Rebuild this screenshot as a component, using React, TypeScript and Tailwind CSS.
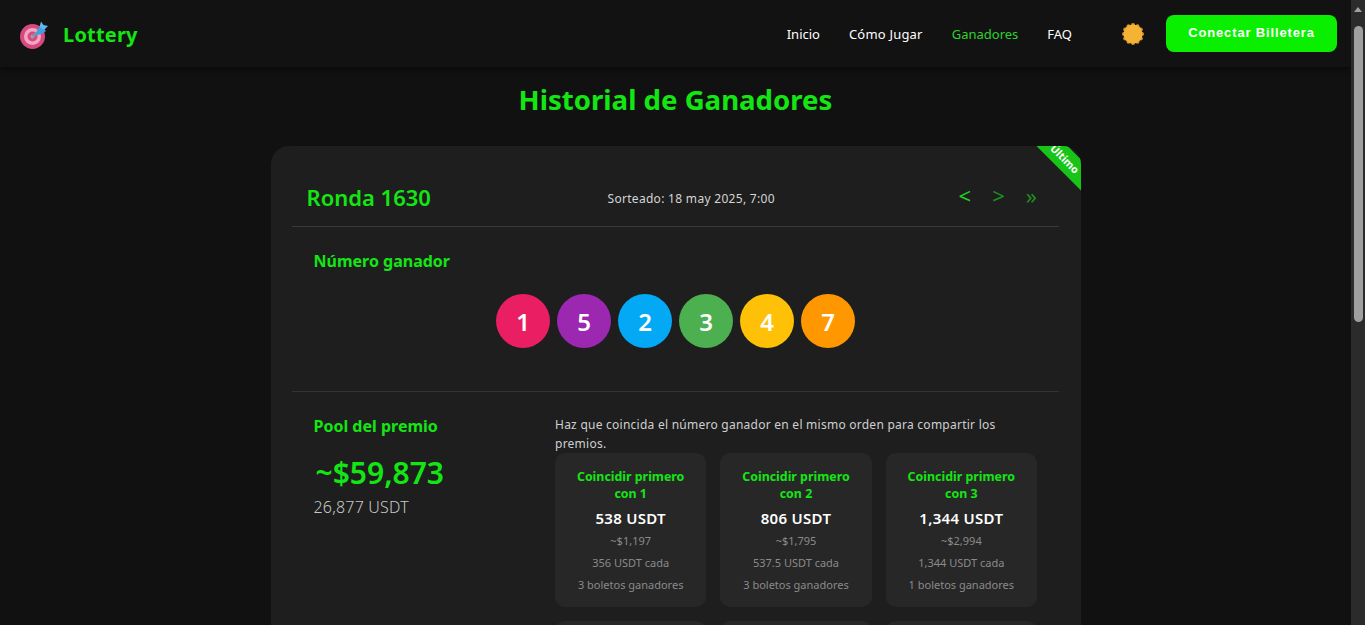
const balls = [
  { n: 1, color: "bg-[#e91e63]" },
  { n: 5, color: "bg-[#9c27b0]" },
  { n: 2, color: "bg-[#03a9f4]" },
  { n: 3, color: "bg-[#4caf50]" },
  { n: 4, color: "bg-[#ffc107]" },
  { n: 7, color: "bg-[#ff9800]" },
];

const prizes = [
  { match: 1, amount: "538 USDT", usd: "~$1,197", each: "356 USDT cada", winners: "3 boletos ganadores" },
  { match: 2, amount: "806 USDT", usd: "~$1,795", each: "537.5 USDT cada", winners: "3 boletos ganadores" },
  { match: 3, amount: "1,344 USDT", usd: "~$2,994", each: "1,344 USDT cada", winners: "1 boletos ganadores" },
];

const TargetLogo = () => (
  <svg width="32" height="32" viewBox="0 0 32 32" className="shrink-0">
    <circle cx="14.5" cy="18.5" r="12.5" fill="#d64a7e" />
    <circle cx="14.5" cy="18.5" r="8.5" fill="#f3a6c4" />
    <circle cx="14.5" cy="18.5" r="5" fill="#d64a7e" />
    <circle cx="14.5" cy="18.5" r="2" fill="#a8a0a8" />
    <path d="M14.5 18.5 L19 14" stroke="#8a97a0" strokeWidth="2" />
    <path d="M17 18 L20 10.5 L23 8 L28 13 L24.5 15.5 Z" fill="#3f9fe0" />
    <path d="M21.5 9 L23 3.5 L25.5 7 L30 8 L26 12 Z" fill="#5cb8ef" />
  </svg>
);

const SunIcon = () => {
  const bumps = Array.from({ length: 12 }, (_, i) => (i * Math.PI) / 6);
  return (
    <svg width="22" height="22" viewBox="0 0 22 22">
      {bumps.map((a) => (
        <circle key={a} cx={11 + 9 * Math.cos(a)} cy={11 + 9 * Math.sin(a)} r="2" fill="#d9912a" />
      ))}
      <circle cx="11" cy="11" r="9.5" fill="#f5b335" />
    </svg>
  );
};

const PrizeCard = ({ prize }: { prize: (typeof prizes)[number] }) => (
  <div className="flex h-[154px] flex-col items-center rounded-[10px] bg-[#272727] px-3 pt-[15px] text-center">
    <div className="w-[124px] text-[12.4px] font-bold leading-[17px] text-[#14e614]">
      {`Coincidir primero con ${prize.match}`}
    </div>
    <div className="mt-[6px] text-[15px] font-semibold leading-[20px] tracking-[0.3px] text-white">{prize.amount}</div>
    <div className="mt-[4px] text-[11px] leading-[18px] text-[#8a8a8a]">{prize.usd}</div>
    <div className="mt-[4px] text-[11px] leading-[18px] text-[#8a8a8a]">{prize.each}</div>
    <div className="mt-[4px] text-[11px] leading-[18px] text-[#8a8a8a]">{prize.winners}</div>
  </div>
);

export default function App() {
  return (
    <div className="flex h-[625px] overflow-hidden bg-[#111111] font-['Noto_Sans',sans-serif]">
      <div className="min-w-0 flex-1">
        <header className="flex h-[67px] items-center bg-[#121212] pl-[18px] pr-[14px] shadow-[0_2px_6px_rgba(0,0,0,0.5)]">
          <TargetLogo />
          <span className="ml-[13px] pt-[2px] text-[20px] font-bold tracking-[0.2px] text-[#14e614]">Lottery</span>
          <nav className="ml-auto flex items-center gap-[29px] pt-[3px] text-[13px] text-white">
            <a>Inicio</a>
            <a className="tracking-[0.2px]">Cómo Jugar</a>
            <a className="text-[#2fd12f]">Ganadores</a>
            <a>FAQ</a>
          </nav>
          <div className="ml-[50px] flex">
            <SunIcon />
          </div>
          <button className="ml-[22px] h-[37px] w-[171px] rounded-[8px] bg-[#0aef00] pb-[2px] font-['Liberation_Sans',sans-serif] text-[13px] font-bold tracking-[0.85px] text-white">
            Conectar Billetera
          </button>
        </header>

        <main className="flex flex-col items-center">
          <h1 className="mt-[12px] text-[27.6px] font-bold leading-[40px] text-[#14e614]">Historial de Ganadores</h1>

          <section className="relative mt-[27px] w-[810px] overflow-hidden rounded-[18px] bg-[#1e1e1e] pl-[21px] pr-[21.5px]">
            <div className="absolute right-[-39px] top-[2px] w-[110px] rotate-45 bg-[#19c419] pb-[3px] pt-[4px] text-center text-[10.5px] font-bold leading-[15px] text-white">
              Último
            </div>

            <div className="flex h-[81px] items-center border-b border-[#3a3a3a] pl-[15px] pr-[22px] pt-[22px]">
              <h2 className="w-[301px] text-[22px] font-semibold text-[#14e614]">Ronda 1630</h2>
              <span className="mt-[4px] text-[12px] tracking-[0.3px] text-[#d5d5d5]">Sorteado: 18 may 2025, 7:00</span>
              <div className="ml-auto flex items-center gap-[21px] pb-[5px] text-[22px] leading-none">
                <span className="text-[#1fd01f]">&lt;</span>
                <span className="text-[#1f8f1f]">&gt;</span>
                <span className="text-[#1f8f1f]">»</span>
              </div>
            </div>

            <div className="h-[165px] border-b border-[#333333] px-[22px] pt-[23px]">
              <h3 className="text-[16px] font-bold leading-[22px] text-[#14e614]">Número ganador</h3>
              <div className="mt-[22px] flex justify-center gap-[7px] pl-[0.5px]">
                {balls.map((ball) => (
                  <div
                    key={ball.n}
                    className={`flex h-[54px] w-[54px] items-center justify-center rounded-full pt-[2px] text-[24px] font-semibold text-white ${ball.color}`}
                  >
                    {ball.n}
                  </div>
                ))}
              </div>
            </div>

            <div className="flex pl-[22px] pr-[22px] pt-[23px]">
              <div className="w-[241.5px] shrink-0">
                <h3 className="text-[16px] font-bold leading-[22px] text-[#14e614]">Pool del premio</h3>
                <div className="mt-[15px] pl-[2px] text-[30px] font-semibold leading-[42px] text-[#14e614]">~$59,873</div>
                <div className="-mt-[1px] text-[16px] font-light leading-[28px] tracking-[0.2px] text-[#c8c8c8]">26,877 USDT</div>
              </div>
              <div className="min-w-0 flex-1">
                <p className="text-[12px] leading-[19px] tracking-[0.25px] text-[#cfcfcf]">
                  Haz que coincida el número ganador en el mismo orden para compartir los premios.
                </p>
                <div className="grid grid-cols-3 gap-[14px]">
                  {prizes.map((prize) => (
                    <PrizeCard key={prize.match} prize={prize} />
                  ))}
                  <div className="h-[154px] rounded-[10px] bg-[#272727]" />
                  <div className="h-[154px] rounded-[10px] bg-[#272727]" />
                  <div className="h-[154px] rounded-[10px] bg-[#272727]" />
                </div>
              </div>
            </div>
          </section>
        </main>
      </div>

      <div className="relative w-[14px] shrink-0 bg-[#2b2b2b]">
        <div className="absolute left-[3px] top-[7px] h-0 w-0 border-x-[4px] border-b-[5px] border-x-transparent border-b-[#a0a0a0]" />
        <div className="absolute left-[3px] top-[26px] h-[296px] w-[9px] rounded-full bg-[#9f9f9f]" />
      </div>
    </div>
  );
}
